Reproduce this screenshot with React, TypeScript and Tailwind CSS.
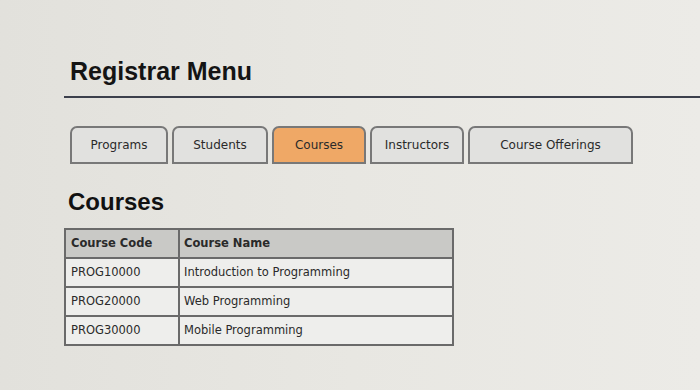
const tabs = ["Programs", "Students", "Courses", "Instructors", "Course Offerings"];
const tabWidths = ["w-[98px]", "w-[96px]", "w-[94px]", "w-[94px]", "w-[165px]"];

const courses = [
  { code: "PROG10000", name: "Introduction to Programming" },
  { code: "PROG20000", name: "Web Programming" },
  { code: "PROG30000", name: "Mobile Programming" },
];

const hand = { fontFamily: '"Comic Sans MS", "DejaVu Sans", sans-serif' };

export default function App() {
  return (
    <div className="w-[700px] h-[390px] overflow-hidden bg-gradient-to-r from-[#e2e1dc] via-[#e8e7e2] to-[#ecebe7] font-['Liberation_Sans',sans-serif]">
      <div className="pt-[55px] pl-[70px]">
        <h1 className="text-[25px] font-bold text-[#141414] leading-[32px]">Registrar Menu</h1>
      </div>
      <div className="mt-[9px] ml-[64px] h-[2px] bg-[#3c404c]" />

      <div className="flex gap-[4px] pl-[70px] mt-[28px]" style={hand}>
        {tabs.map((t, i) => (
          <div
            key={t}
            className={`${tabWidths[i]} h-[38px] flex items-center justify-center rounded-t-[7px] border-2 border-[#787878] text-[12px] text-[#2a2a2a] ${
              t === "Courses" ? "bg-[#efa866]" : "bg-[#e1e1df]"
            }`}
          >
            {t}
          </div>
        ))}
      </div>

      <h2 className="pl-[68px] mt-[23px] text-[24px] font-semibold text-[#111] leading-[30px]">Courses</h2>

      <table className="ml-[64px] mt-[11px] border-collapse border-2 border-[#6a6a6a] text-[11.5px] text-[#2a2a2a]" style={hand}>
        <thead>
          <tr className="bg-[#c9c9c6] h-[29px]">
            <th className="w-[114px] border-2 border-[#6a6a6a] text-left px-[5px] font-bold">Course Code</th>
            <th className="w-[274px] border-2 border-[#6a6a6a] text-left px-[4px] font-bold">Course Name</th>
          </tr>
        </thead>
        <tbody>
          {courses.map((c) => (
            <tr key={c.code} className="h-[29px] bg-[#eeeeec]">
              <td className="border-2 border-[#6a6a6a] px-[5px]">{c.code}</td>
              <td className="border-2 border-[#6a6a6a] px-[4px]">{c.name}</td>
            </tr>
          ))}
        </tbody>
      </table>
    </div>
  );
}
